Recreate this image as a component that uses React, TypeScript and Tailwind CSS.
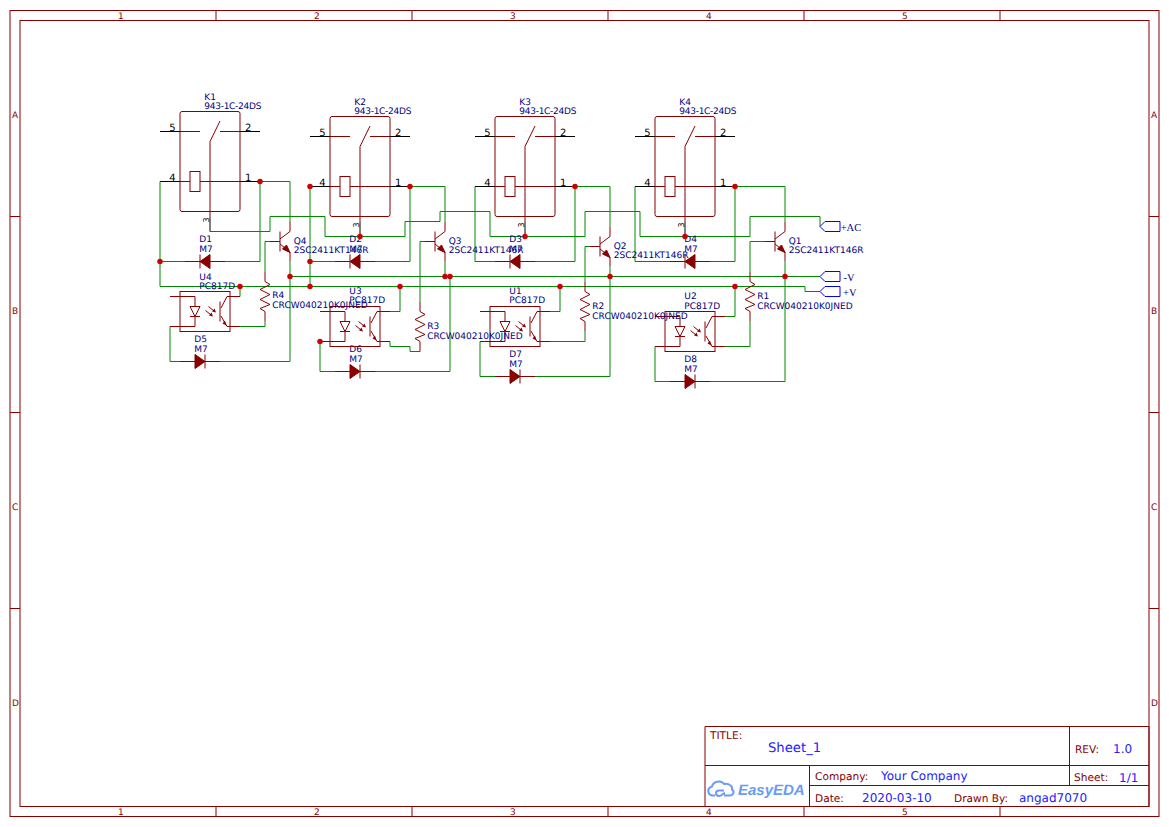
const RED = "#880000";
const GREEN = "#008800";
const NAVY = "#000080";
const BLUE = "#0000ff";

// wires as polylines, y on the half pixel like the original export
const wires: string[] = [
  // K1
  "160,181.5 160,286.5",
  "260,181.5 290,181.5 290,221.5",
  "260,181.5 260,261.5 225,261.5",
  "160,261.5 185,261.5",
  "290,261.5 290,361.5 220,361.5",
  "180,361.5 170,361.5 170,326.5 180,326.5",
  "270,241.5 265,241.5 265,271.5",
  "265,321.5 265,326.5 240,326.5",
  "240,296.5 240,286.5",
  // control line running across every relay
  "210,231.5 270,231.5 270,216.5 325,216.5 325,236.5 405,236.5 405,221.5 440,221.5 440,211.5 490,211.5 490,236.5 585,236.5 585,211.5 640,211.5 640,236.5 750,236.5 750,216.5 820,216.5 820,226.5",
  // rails
  "160,286.5 805,286.5 805,291.5 820,291.5",
  "290,276.5 820,276.5",
  // K2
  "310,186.5 310,286.5",
  "310,261.5 335,261.5",
  "410,186.5 445,186.5 445,221.5",
  "410,186.5 410,261.5 375,261.5",
  "445,261.5 445,276.5",
  "425,241.5 420,241.5 420,301.5",
  "400,286.5 400,311.5 390,311.5",
  "390,341.5 390,346.5 410,346.5 410,351.5 420,351.5",
  "320,341.5 320,371.5 335,371.5",
  "375,371.5 450,371.5 450,276.5",
  // K3
  "475,186.5 475,261.5 495,261.5",
  "575,186.5 610,186.5 610,226.5",
  "575,186.5 575,261.5 535,261.5",
  "610,266.5 610,376.5 535,376.5",
  "590,246.5 585,246.5 585,281.5",
  "585,331.5 585,341.5 550,341.5",
  "560,286.5 560,311.5 550,311.5",
  "480,341.5 480,376.5 495,376.5",
  // K4
  "635,186.5 635,261.5 670,261.5",
  "735,186.5 785,186.5 785,221.5",
  "735,186.5 735,261.5 710,261.5",
  "785,261.5 785,381.5 710,381.5",
  "765,241.5 750,241.5 750,271.5",
  "750,321.5 750,346.5 725,346.5",
  "735,286.5 735,316.5 725,316.5",
  "655,346.5 655,381.5 670,381.5",
];

const junctions = [
  [260, 181.5], [160, 261.5], [290, 276.5], [240, 286.5],
  [310, 186.5], [410, 186.5], [310, 261.5], [310, 286.5], [360, 236.5], [400, 286.5], [320, 341.5],
  [445, 276.5], [450, 276.5],
  [575, 186.5], [525, 236.5], [610, 276.5], [560, 286.5],
  [735, 186.5], [685, 236.5], [785, 276.5], [735, 286.5],
];

function Relay({ x, y, name }: { x: number; y: number; name: string }) {
  return (
    <g transform={`translate(${x} ${y})`}>
      <rect x="180" y="111.5" width="60" height="100" rx="2" fill="none" stroke={RED} />
      <path d="M180 131.5H200M220 131.5H240M180 181.5H190M200 181.5H240M210 141.5L220 121M210 141.5V216.5" fill="none" stroke={RED} />
      <rect x="190" y="171.5" width="10" height="20" fill="none" stroke={RED} />
      <path d="M160 131.5H180M240 131.5H260M160 181.5H180M240 181.5H260M210 216.5V231.5" fill="none" stroke="#000" />
      <text x="169.3" y="130.5" fontSize="10" fill="#000">5</text>
      <text x="245" y="130.5" fontSize="10" fill="#000">2</text>
      <text x="169.3" y="180.5" fontSize="10" fill="#000">4</text>
      <text x="245" y="180.5" fontSize="10" fill="#000">1</text>
      <text transform="translate(208.5 222.5) rotate(-90)" fontSize="8" fill="#000">3</text>
      <text x="204.3" y="100" fontSize="9" fill={NAVY}>{name}</text>
      <text x="204.3" y="108.5" fontSize="9" fill={NAVY} letterSpacing="-0.27">943-1C-24DS</text>
    </g>
  );
}

function Transistor({ x, y, name }: { x: number; y: number; name: string }) {
  return (
    <g transform={`translate(${x} ${y})`}>
      <path d="M270 241.5H280M280 231.5V251.5M280 239L290 231.5V221.5M280 244L290 252V261.5" fill="none" stroke={RED} />
      <path d="M290 252.5L282.5 249L286.5 245Z" fill={RED} stroke={RED} />
      <text x="293.7" y="244" fontSize="9" fill={NAVY}>{name}</text>
      <text x="293.7" y="253" fontSize="9" fill={NAVY}>2SC2411KT146R</text>
    </g>
  );
}

// up = tip on the left (D1..D4), otherwise tip on the right (D5..D8)
function Diode({ x, y, name, up }: { x: number; y: number; name: string; up?: boolean }) {
  // x,y: left end of the 40px long symbol
  const d = up
    ? `M${x} ${y}H${x + 15}M${x + 25} ${y}H${x + 40}M${x + 15} ${y - 7}V${y + 7}`
    : `M${x} ${y}H${x + 15}M${x + 25} ${y}H${x + 40}M${x + 25} ${y - 7}V${y + 7}`;
  const tri = up
    ? `${x + 15},${y} ${x + 25},${y - 7} ${x + 25},${y + 7}`
    : `${x + 15},${y - 7} ${x + 25},${y} ${x + 15},${y + 7}`;
  return (
    <g>
      <path d={d} fill="none" stroke={RED} />
      <polygon points={tri} fill={RED} stroke={RED} />
      <text x={x + 14.3} y={y - 19.3} fontSize="9" fill={NAVY}>{name}</text>
      <text x={x + 14.3} y={y - 9.8} fontSize="9" fill={NAVY}>M7</text>
    </g>
  );
}

function Opto({ x, y, name, ty }: { x: number; y: number; name: string; ty: number }) {
  return (
    <g transform={`translate(${x} ${y})`}>
      <rect x="180" y="291.5" width="50" height="40" fill="none" stroke={RED} />
      <path d="M170 296.5H195V326.5H170M190 316.5H200M220 301.5V321.5M221 308L227 296.5H240M221 316L227 326.5H240" fill="none" stroke={RED} />
      <polygon points="190,306.5 200,306.5 195,316.5" fill="#fff" stroke={RED} />
      <path d="M205.5 310.5L211 315M208.5 306.5L214 311" fill="none" stroke={RED} />
      <path d="M213 316.5L209 315.5L211.5 312.5ZM216 312.5L212 311.5L214.5 308.5Z" fill={RED} />
      <path d="M226.5 325.5L222.5 323.5L225 320.5Z" fill={RED} />
      <text x="199.3" y={ty} fontSize="9" fill={NAVY}>{name}</text>
      <text x="199.3" y={ty + 9.3} fontSize="9" fill={NAVY}>PC817D</text>
    </g>
  );
}

function Resistor({ x, y, name, ly }: { x: number; y: number; name: string; ly: number }) {
  // y is the top of the pin, 50px long overall
  const z = `M${x} ${y}V${y + 10}L${x + 5} ${y + 13}L${x - 5} ${y + 18}L${x + 5} ${y + 23}L${x - 5} ${y + 28}L${x + 5} ${y + 33}L${x - 5} ${y + 37}L${x} ${y + 40}V${y + 50}`;
  return (
    <g>
      <path d={z} fill="none" stroke={RED} />
      <text x={x + 7.3} y={ly} fontSize="9" fill={NAVY}>{name}</text>
      <text x={x + 7.3} y={ly + 9.6} fontSize="9" fill={NAVY}>CRCW040210K0JNED</text>
    </g>
  );
}

function Flag({ y, label, lx }: { y: number; label: string; lx: number }) {
  return (
    <g>
      <polygon points={`820,${y} 825,${y - 5} 840,${y - 5} 840,${y + 5} 825,${y + 5}`} fill="none" stroke={BLUE} />
      <text x={lx} y={y + 4} fontSize="10.5" fill={NAVY} fontFamily="'Liberation Serif', serif">{label}</text>
    </g>
  );
}

function Sheet() {
  const cols = [216, 412, 608, 804, 1000];
  const rows = [216.5, 412.5, 608.5];
  const colLabels = [118, 314, 510, 706, 902];
  const rowLabels = [["A", 118], ["B", 314], ["C", 510], ["D", 706]] as const;
  return (
    <g>
      <rect x="10" y="10.5" width="1149" height="806" fill="none" stroke={RED} />
      <rect x="20" y="20.5" width="1129" height="786" fill="none" stroke={RED} />
      {cols.map((c) => (
        <path key={c} d={`M${c} 10.5V20.5M${c} 806.5V816.5`} stroke={RED} fill="none" />
      ))}
      {rows.map((r) => (
        <path key={r} d={`M10 ${r}H20M1149 ${r}H1159`} stroke={RED} fill="none" />
      ))}
      {colLabels.map((c, i) => (
        <g key={c} fontSize="9" fill={RED}>
          <text x={c} y="18.5">{i + 1}</text>
          <text x={c} y="815">{i + 1}</text>
        </g>
      ))}
      {rowLabels.map(([t, y]) => (
        <g key={t} fontSize="9" fill={RED}>
          <text x="12" y={y}>{t}</text>
          <text x="1151" y={y}>{t}</text>
        </g>
      ))}
    </g>
  );
}

function TitleBlock() {
  return (
    <g>
      <path
        d="M705 726.5H1149V806.5H705ZM705 765.5H1149M809.5 785.5H1149M809.5 765.5V806.5M1069.5 726.5V785.5"
        fill="none"
        stroke={RED}
      />
      <g fontSize="10.6" fill={RED}>
        <text x="710" y="738.5">TITLE:</text>
        <text x="1075" y="752.5">REV:</text>
        <text x="815" y="779.5">Company:</text>
        <text x="1074" y="781">Sheet:</text>
        <text x="815" y="801.5">Date:</text>
        <text x="954" y="801.5">Drawn By:</text>
      </g>
      <g fill="#2222ff">
        <text x="768" y="752" fontSize="13.2">Sheet_1</text>
        <text x="1113" y="752.5" fontSize="12">1.0</text>
        <text x="881" y="779.5" fontSize="12">Your Company</text>
        <text x="1119" y="782" fontSize="12">1/1</text>
        <text x="862" y="801.5" fontSize="12">2020-03-10</text>
        <text x="1019" y="801.5" fontSize="12">angad7070</text>
      </g>
      {/* EasyEDA cloud */}
      <path
        d="M715 795.5H713C707.5 795.5 706.5 788 712 786.5C713 781.5 721 779.5 724 784C729 783 733 786.5 732 789.5C735 791.5 733.5 795.5 729.5 795.5H724M724 790.5H719C715 790.5 715 796 719 796C722 796 722.5 793.5 725 793"
        fill="none"
        stroke="#6a9bf5"
        strokeWidth="2"
      />
      <text x="738" y="794.5" fontSize="15" fontStyle="italic" fontWeight="bold" fontFamily="'Liberation Sans', sans-serif" fill="#6a9bf5">EasyEDA</text>
    </g>
  );
}

export default function App() {
  return (
    <div className="h-[827px] w-[1169px] overflow-hidden bg-white">
      <svg
        width="1169"
        height="827"
        viewBox="0 0 1169 827"
        textRendering="geometricPrecision"
        className="block font-['DejaVu_Sans',sans-serif]"
      >
        <Sheet />
        <TitleBlock />

        {wires.map((w) => (
          <polyline key={w} points={w} fill="none" stroke={GREEN} />
        ))}

        <Relay x={0} y={0} name="K1" />
        <Relay x={150} y={5} name="K2" />
        <Relay x={315} y={5} name="K3" />
        <Relay x={475} y={5} name="K4" />

        <Diode x={185} y={261.5} name="D1" up />
        <Diode x={335} y={261.5} name="D2" up />
        <Diode x={495} y={261.5} name="D3" up />
        <Diode x={670} y={261.5} name="D4" up />
        <Diode x={180} y={361.5} name="D5" />
        <Diode x={335} y={371.5} name="D6" />
        <Diode x={495} y={376.5} name="D7" />
        <Diode x={670} y={381.5} name="D8" />

        <Transistor x={0} y={0} name="Q4" />
        <Transistor x={155} y={0} name="Q3" />
        <Transistor x={320} y={5} name="Q2" />
        <Transistor x={495} y={0} name="Q1" />

        <Opto x={0} y={0} name="U4" ty={279.7} />
        <Opto x={150} y={15} name="U3" ty={279} />
        <Opto x={310} y={15} name="U1" ty={279} />
        <Opto x={485} y={20} name="U2" ty={279.3} />

        <Resistor x={265} y={271.5} name="R4" ly={298} />
        <Resistor x={420} y={301.5} name="R3" ly={329} />
        <Resistor x={585} y={281.5} name="R2" ly={309.3} />
        <Resistor x={750} y={271.5} name="R1" ly={299.3} />

        <Flag y={226.5} label="+AC" lx={840.7} />
        <Flag y={276.5} label="-V" lx={843.5} />
        <Flag y={291.5} label="+V" lx={843} />

        {junctions.map(([x, y]) => (
          <circle key={`${x}-${y}`} cx={x} cy={y} r="2.75" fill="#cc0000" />
        ))}
      </svg>
    </div>
  );
}
